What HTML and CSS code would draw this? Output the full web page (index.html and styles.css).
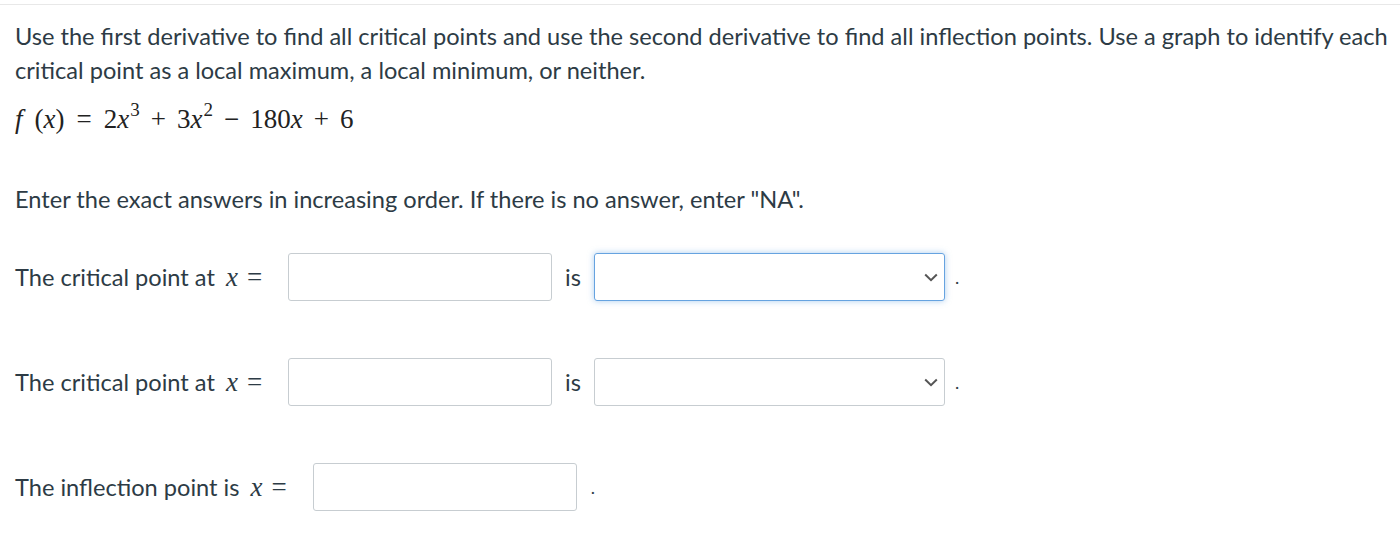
FILE: index.html
```html
<!DOCTYPE html>
<html lang="en">
<head>
    <meta charset="UTF-8">
    <title>Critical and Inflection Points</title>
    <link rel="stylesheet" href="styles.css">
</head>
<body>
    <div class="question">
        <p class="prompt">Use the first derivative to find all critical points and use the second derivative to find all inflection points. Use a graph to identify each critical point as a local maximum, a local minimum, or neither.</p>
        <p class="formula">
            <span class="mi f">f</span><span class="mo">(</span><span class="mi">x</span><span class="mo">)</span><span class="rel">=</span>2<span class="mi">x</span><sup>3</sup><span class="bin">+</span>3<span class="mi">x</span><sup>2</sup><span class="bin">&minus;</span>180<span class="mi">x</span><span class="bin">+</span>6
        </p>
        <p class="note">Enter the exact answers in increasing order. If there is no answer, enter "NA".</p>

        <div class="answer-row">
            <span class="label">The critical point at <span class="mi">x</span><span class="rel">=</span></span>
            <input type="text" class="answer">
            <span class="word">is</span>
            <div class="dropdown focused">
                <select><option></option><option>a local maximum</option><option>a local minimum</option><option>neither</option></select>
                <svg class="chevron" width="14" height="9" viewBox="0 0 14 9"><path d="M1.2 1.5 L7 7.2 L12.8 1.5" fill="none" stroke="#555" stroke-width="2"/></svg>
            </div>
            <span class="dot">.</span>
        </div>

        <div class="answer-row">
            <span class="label">The critical point at <span class="mi">x</span><span class="rel">=</span></span>
            <input type="text" class="answer">
            <span class="word">is</span>
            <div class="dropdown">
                <select><option></option><option>a local maximum</option><option>a local minimum</option><option>neither</option></select>
                <svg class="chevron" width="14" height="9" viewBox="0 0 14 9"><path d="M1.2 1.5 L7 7.2 L12.8 1.5" fill="none" stroke="#555" stroke-width="2"/></svg>
            </div>
            <span class="dot">.</span>
        </div>

        <div class="answer-row">
            <span class="label">The inflection point is <span class="mi">x</span><span class="rel">=</span></span>
            <input type="text" class="answer">
            <span class="dot end">.</span>
        </div>
    </div>
</body>
</html>
```

FILE: styles.css
```css
body {
    margin: 0;
    background: #fff;
    font-family: Lato, "Open Sans", sans-serif;
    color: #2d3b45;
}
.question {
    margin-top: 4px;
    border-top: 1px solid #e8e8e8;
    padding: 14px 4px 0 15px;
    font-size: 23.6px;
}
.prompt {
    margin: 0;
    line-height: 34px;
}
.formula {
    margin: 12px 0 0 0;
    font-family: "Liberation Serif", "Times New Roman", serif;
    font-size: 27px;
    line-height: 40px;
    color: #222;
}
.mi {
    font-family: "Liberation Serif", "Times New Roman", serif;
    font-style: italic;
}
.formula .f {
    margin-right: 12px;
}
.formula sup {
    font-size: 19px;
    vertical-align: 12px;
    line-height: 0;
    margin-left: 1px;
}
.rel {
    font-family: "Liberation Serif", "Times New Roman", serif;
    margin: 0 12px;
}
.bin {
    margin: 0 11px;
}
.note {
    margin: 43px 0 0 0;
    line-height: 34px;
}
.answer-row {
    display: flex;
    align-items: center;
    height: 48px;
    margin-top: 37px;
}
.answer-row + .answer-row {
    margin-top: 57px;
}
.label .mi {
    font-size: 27px;
    margin-left: 5px;
}
.label .rel {
    font-size: 27px;
    margin-left: 9px;
    margin-right: 0;
}
.answer {
    width: 264px;
    height: 48px;
    box-sizing: border-box;
    border: 1px solid #c7cdd1;
    border-radius: 3px;
    margin-left: 26px;
    font-size: 18px;
    padding: 0 10px;
}
.word {
    margin: 0 13px 0 13px;
}
.dropdown {
    position: relative;
    width: 351px;
    height: 48px;
    box-sizing: border-box;
    border: 1px solid #c7cdd1;
    border-radius: 3px;
}
.dropdown.focused {
    border-color: #66a3e0;
    box-shadow: 0 0 6px rgba(102, 163, 224, 0.55);
}
.dropdown select {
    width: 100%;
    height: 100%;
    border: none;
    background: transparent;
    appearance: none;
    -webkit-appearance: none;
    outline: none;
    font-size: 18px;
}
.chevron {
    position: absolute;
    right: 6px;
    top: 19px;
    pointer-events: none;
}
.dot {
    margin-left: 10px;
    font-size: 18px;
}
.dot.end {
    margin-left: 14px;
}
```
